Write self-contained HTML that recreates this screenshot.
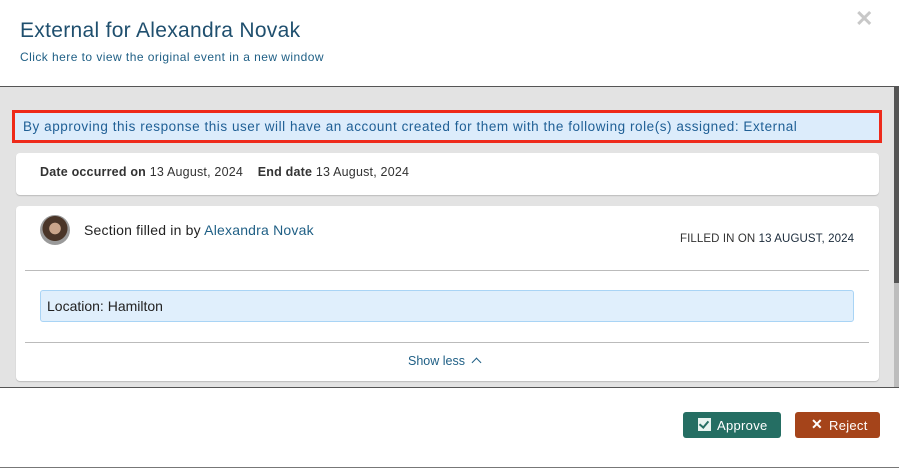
<!DOCTYPE html>
<html><head><style>
*{margin:0;padding:0;box-sizing:border-box}
body{width:899px;height:469px;position:relative;background:#fff;font-family:"Liberation Sans",sans-serif;overflow:hidden}
.a{position:absolute}
</style></head><body>
<div class="a" style="left:20px;top:19px;font-size:21px;color:#1f4f6e;letter-spacing:0.3px">External for Alexandra Novak</div>
<div class="a" style="left:20px;top:50px;font-size:12px;color:#1f5f85;letter-spacing:0.45px">Click here to view the original event in a new window</div>
<div class="a" style="left:855px;top:6px;font-size:22px;color:#c8c8c8;font-weight:bold">✕</div>
<div class="a" style="left:0;top:86px;width:899px;height:1px;background:#555"></div>
<div class="a" style="left:0;top:87px;width:894px;height:300px;background:#e3e3e3"></div>
<div class="a" style="left:894px;top:87px;width:5px;height:300px;background:#bdbdbd"></div>
<div class="a" style="left:894px;top:87px;width:5px;height:196px;background:#555"></div>
<div class="a" style="left:12px;top:110px;width:870px;height:33px;border:3px solid #ee2a1a;background:#dcecfb;color:#1f5f95;font-size:13.5px;padding:6px 0 0 8px;letter-spacing:0.55px;white-space:nowrap">By approving this response this user will have an account created for them with the following role(s) assigned: External</div>
<div class="a" style="left:16px;top:153px;width:863px;height:42px;background:#fff;border-radius:4px;box-shadow:0 1px 1px #bbb;font-size:12.5px;color:#333;padding:12px 0 0 24px;letter-spacing:0.2px"><b>Date occurred on</b> 13 August, 2024 &nbsp;&nbsp;&nbsp;<b>End date</b> 13 August, 2024</div>
<div class="a" style="left:16px;top:206px;width:863px;height:175px;background:#fff;border-radius:4px;box-shadow:0 1px 1px #bbb"></div>
<div class="a" style="left:40px;top:215px;width:30px;height:30px;border-radius:50%;background:radial-gradient(circle at 50% 45%,#c9a48a 0 25%,#4a3528 27% 55%,#9a9a9a 57%)"></div>
<div class="a" style="left:84px;top:222px;font-size:14px;color:#222;letter-spacing:0.2px">Section filled in by <span style="color:#1f5f85">Alexandra Novak</span></div>
<div class="a" style="left:680px;top:233px;font-size:11.5px;color:#333;letter-spacing:0.1px">FILLED IN ON <span style="color:#1a2a3a">13 AUGUST, 2024</span></div>
<div class="a" style="left:25px;top:270px;width:844px;height:1px;background:#bbb"></div>
<div class="a" style="left:40px;top:290px;width:814px;height:32px;background:#e0effc;border:1px solid #a9d4f5;border-radius:3px;font-size:14px;color:#222;padding:7px 0 0 6px">Location: Hamilton</div>
<div class="a" style="left:25px;top:342px;width:844px;height:1px;background:#bbb"></div>
<div class="a" style="left:408px;top:354px;font-size:12.5px;color:#1f5f85">Show less <span style="display:inline-block;width:7px;height:7px;border-left:1.3px solid #1f5f85;border-top:1.3px solid #1f5f85;transform:rotate(45deg);margin-left:5px;position:relative;top:1px"></span></div>
<div class="a" style="left:0;top:387px;width:899px;height:1px;background:#555"></div>
<div class="a" style="left:683px;top:412px;width:98px;height:26px;background:#256e63;border-radius:3px;color:#fff;font-size:13px;padding:6px 0 0 34px;letter-spacing:0.3px">Approve</div>
<div class="a" style="left:698px;top:418px;width:13px;height:13px;background:#e8f3f0"></div>
<div class="a" style="left:701px;top:419px;width:6px;height:9px;border-right:2px solid #256e63;border-bottom:2px solid #256e63;transform:rotate(40deg)"></div>
<div class="a" style="left:795px;top:412px;width:85px;height:26px;background:#a5441a;border-radius:3px;color:#fff;font-size:13px;padding:6px 0 0 34px;letter-spacing:0.3px">Reject</div>
<div class="a" style="left:811px;top:416px;color:#fff;font-size:14px;font-weight:bold">✕</div>
<div class="a" style="left:0;top:467px;width:899px;height:1px;background:#777"></div>
</body></html>
